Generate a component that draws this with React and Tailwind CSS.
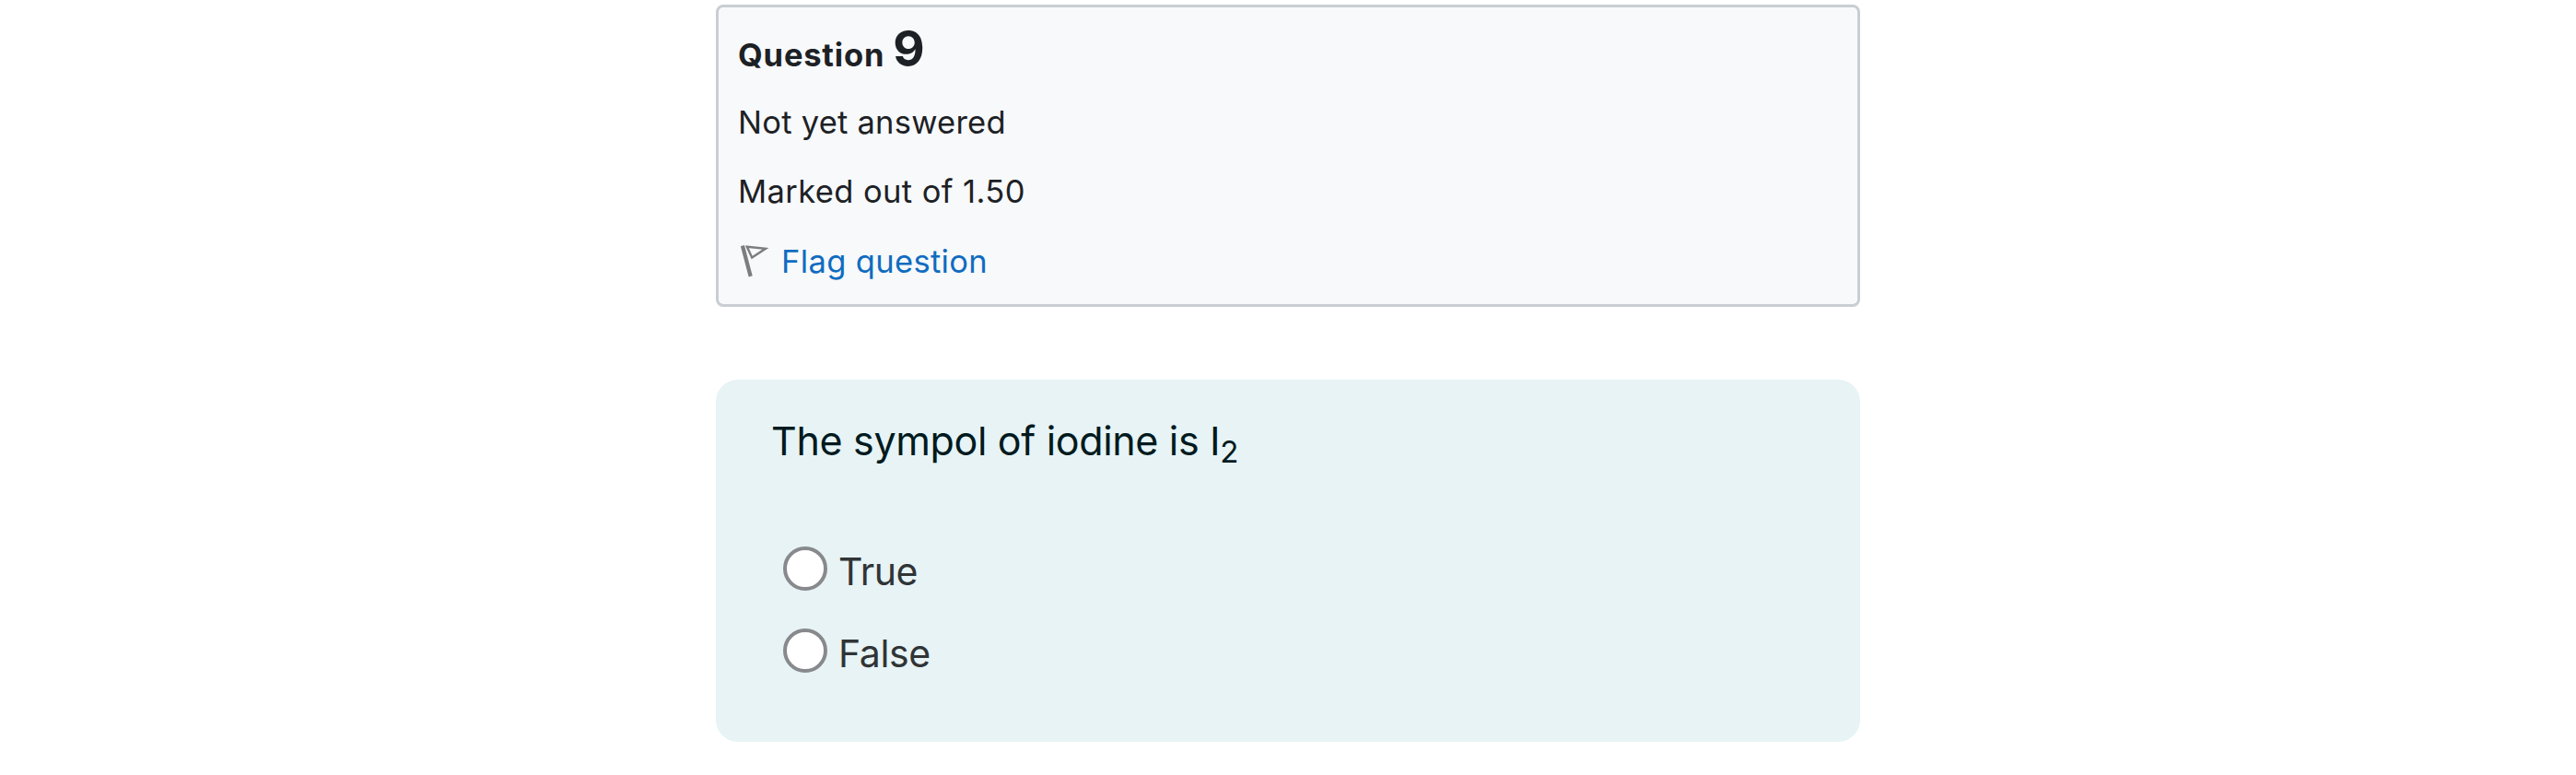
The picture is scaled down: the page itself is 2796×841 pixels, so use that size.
function FlagIcon() {
  return (
    <svg className="h-[38px] w-[34px] shrink-0" viewBox="0 0 34 38" fill="none" stroke="#7d7d7d">
      <path d="M4.9 2.6 L13.7 35.9" strokeWidth="4.2" />
      <path d="M9.8 3.8 L30 5.8 L15.2 15.5 Z" strokeWidth="2.4" />
    </svg>
  );
}

function Answer({ label, spacing }) {
  return (
    <label className="flex h-[89px] items-start text-[#303436]">
      <span className="h-12 w-12 rounded-full border-4 border-[#87898c] bg-white" />
      <span className={`ml-[12px] mt-[2px] text-[41px] leading-[50px] ${spacing}`}>{label}</span>
    </label>
  );
}

export default function App() {
  return (
    <main className="h-[841px] overflow-hidden bg-white pt-[5px] font-['Inter',sans-serif]">
      <section className="mx-auto h-[328px] w-[1242px] rounded-[8px] border-3 border-[#c9ced3] bg-[#f7f9fb] pl-[21px] text-[34.5px] text-[#1d2125]">
        <h3 className="flex h-[87px] items-baseline font-bold leading-[90px]">
          <span className="tracking-[0.8px]">Question</span>
          <span className="ml-[9px] text-[53px]">9</span>
        </h3>
        <div className="h-[75px] leading-[75px] tracking-[0.25px]">Not yet answered</div>
        <div className="h-[75px] leading-[75px] tracking-[0.4px]">Marked out of 1.50</div>
        <div className="flex h-[76px] items-center text-[#0f6cbf]">
          <FlagIcon />
          <span className="ml-[13px] mt-[1px] tracking-[0.35px]">Flag question</span>
        </div>
      </section>
      <section className="mx-auto mt-[79px] h-[393px] w-[1242px] rounded-[24px] bg-[#e7f3f5] pl-[60px] pt-[36px]">
        <p className="flex h-[145px] items-baseline text-[43px] leading-[60px] text-[#001a1e]">
          <span className="whitespace-pre tracking-[-0.33px]">The sympol of iodine is I</span>
          <sub className="relative top-[8px] align-baseline text-[33px] leading-none">2</sub>
        </p>
        <div className="pl-[13px]">
          <Answer label="True" spacing="tracking-[-0.4px]" />
          <Answer label="False" spacing="tracking-[-0.4px]" />
        </div>
      </section>
    </main>
  );
}
